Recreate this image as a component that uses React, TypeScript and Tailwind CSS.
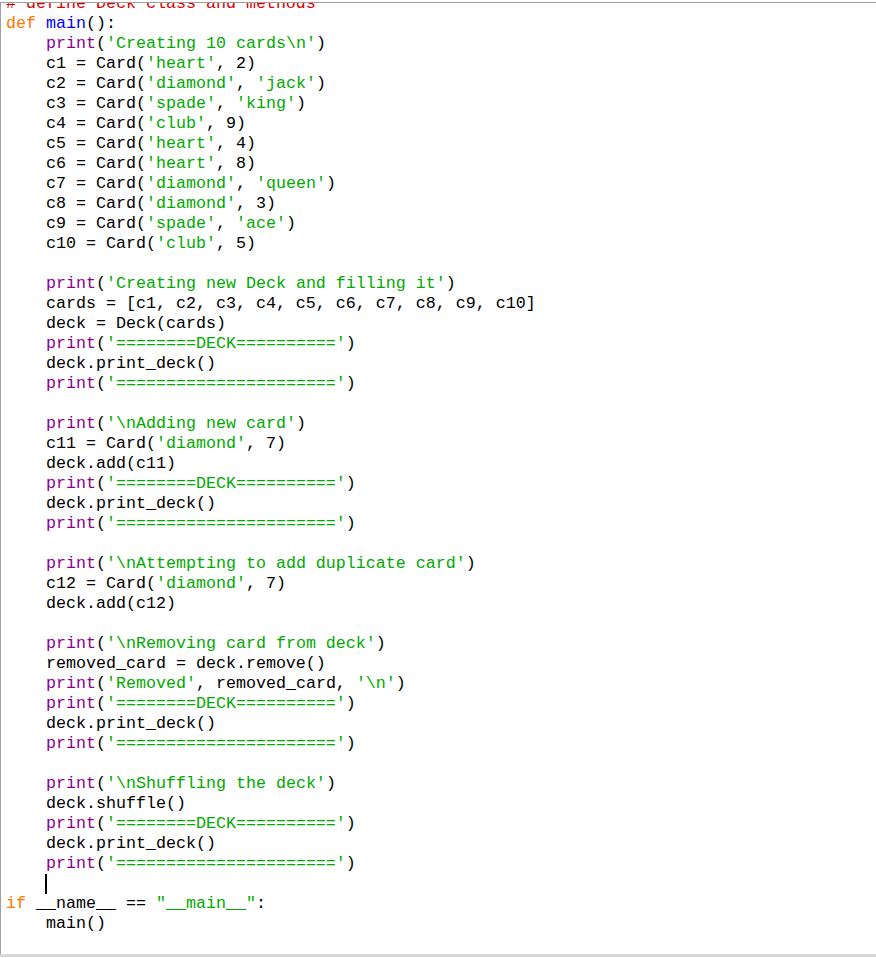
import React from "react";

const DECK = "    print('========DECK==========')";
const BAR = "    print('======================')";

const lines: string[] = [
  "# define Deck class and methods",
  "def main():",
  "    print('Creating 10 cards\\n')",
  "    c1 = Card('heart', 2)",
  "    c2 = Card('diamond', 'jack')",
  "    c3 = Card('spade', 'king')",
  "    c4 = Card('club', 9)",
  "    c5 = Card('heart', 4)",
  "    c6 = Card('heart', 8)",
  "    c7 = Card('diamond', 'queen')",
  "    c8 = Card('diamond', 3)",
  "    c9 = Card('spade', 'ace')",
  "    c10 = Card('club', 5)",
  "",
  "    print('Creating new Deck and filling it')",
  "    cards = [c1, c2, c3, c4, c5, c6, c7, c8, c9, c10]",
  "    deck = Deck(cards)",
  DECK,
  "    deck.print_deck()",
  BAR,
  "",
  "    print('\\nAdding new card')",
  "    c11 = Card('diamond', 7)",
  "    deck.add(c11)",
  DECK,
  "    deck.print_deck()",
  BAR,
  "",
  "    print('\\nAttempting to add duplicate card')",
  "    c12 = Card('diamond', 7)",
  "    deck.add(c12)",
  "",
  "    print('\\nRemoving card from deck')",
  "    removed_card = deck.remove()",
  "    print('Removed', removed_card, '\\n')",
  DECK,
  "    deck.print_deck()",
  BAR,
  "",
  "    print('\\nShuffling the deck')",
  "    deck.shuffle()",
  DECK,
  "    deck.print_deck()",
  BAR,
  "@cursor",
  'if __name__ == "__main__":',
  "    main()",
];

// comment, string, keyword, builtin, definition
const colors = [
  "text-[#dd0000]",
  "text-[#00aa00]",
  "text-[#ff7700]",
  "text-[#900090]",
  "text-[#0000ff]",
];

const highlight = (line: string) => {
  const re = /(#.*)|('[^']*'|"[^"]*")|\b(def|if)\b|\b(print)\b|(?<=def )(\w+)/g;
  const out: React.ReactNode[] = [];
  let last = 0;
  let m: RegExpExecArray | null;
  while ((m = re.exec(line))) {
    if (m.index > last) out.push(line.slice(last, m.index));
    const g = [1, 2, 3, 4, 5].find((i) => m![i] !== undefined)!;
    out.push(
      <span key={m.index} className={colors[g - 1]}>
        {m[0]}
      </span>
    );
    last = m.index + m[0].length;
  }
  if (last < line.length) out.push(line.slice(last));
  return out;
};

const App = () => {
  return (
    <div className="w-[876px] h-[958px] bg-white flex flex-col">
      <div className="h-[2px]" />
      <div className="flex-1 border-l border-t border-[#a0a0a0] overflow-hidden pl-[5px]">
        <div className="-mt-[9px] font-['Liberation_Mono',monospace] text-[16.67px] leading-5 whitespace-pre text-black">
          {lines.map((line, i) =>
            line === "@cursor" ? (
              <div key={i} className="h-5">
                {"    "}
                <span className="inline-block w-[2px] h-5 bg-black align-top -ml-[1px]" />
              </div>
            ) : (
              <div key={i} className="h-5">
                {highlight(line)}
              </div>
            )
          )}
        </div>
      </div>
      <div className="h-[3px] bg-[#d8d8d8]" />
      <div className="h-px" />
    </div>
  );
};

export default App;
